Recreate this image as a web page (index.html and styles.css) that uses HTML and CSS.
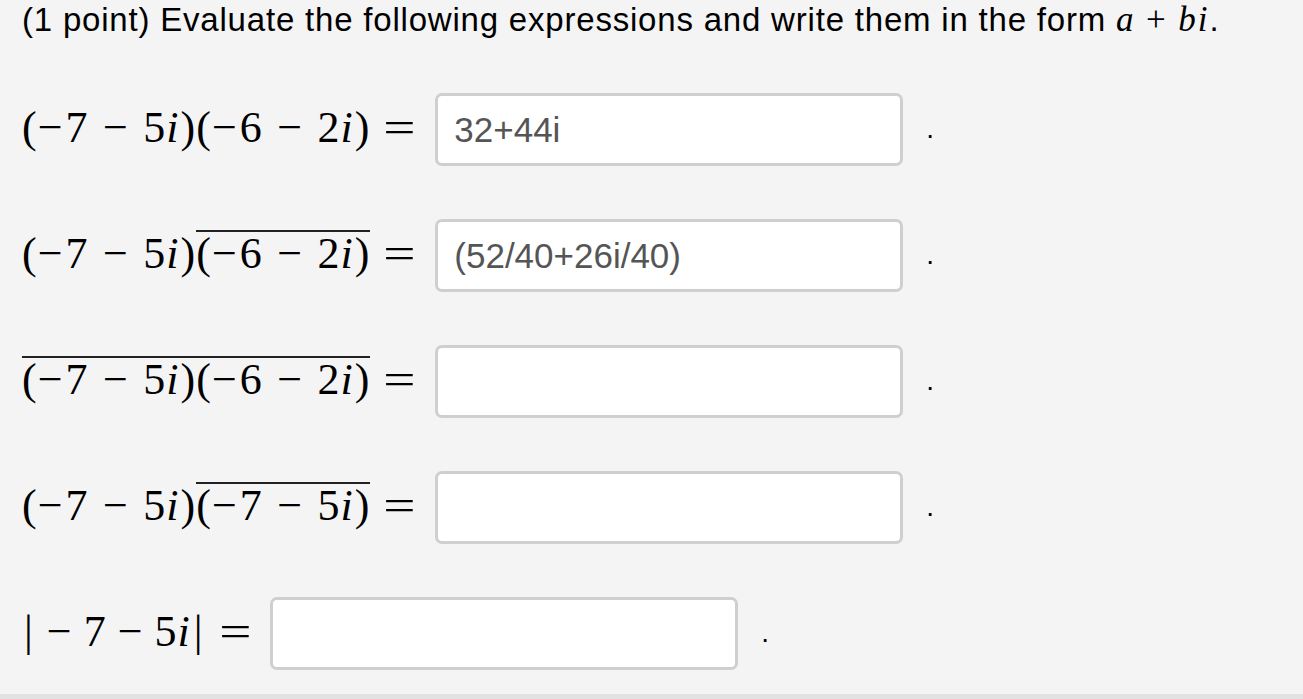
FILE: index.html
```html
<!DOCTYPE html>
<html lang="en">
<head>
    <meta charset="UTF-8">
    <title>Complex numbers</title>
    <link rel="stylesheet" href="styles.css">
</head>
<body>
    <div class="problem">
        <p class="prompt">(1 point) Evaluate the following expressions and write them in the form <span class="tmath"><i>a</i><span class="op">+</span><i>b</i><i>i</i></span>.</p>

        <div class="row">
            <span class="math">(<span class="neg">&minus;</span>7<span class="op">&minus;</span>5<i>i</i>)(<span class="neg">&minus;</span>6<span class="op">&minus;</span>2<i>i</i>)</span>
            <span class="math eq">=</span>
            <input class="answer" type="text" value="32+44i">
            <span class="dot">.</span>
        </div>

        <div class="row">
            <span class="math">(<span class="neg">&minus;</span>7<span class="op">&minus;</span>5<i>i</i>)<span class="bar">(<span class="neg">&minus;</span>6<span class="op">&minus;</span>2<i>i</i>)</span></span>
            <span class="math eq">=</span>
            <input class="answer" type="text" value="(52/40+26i/40)">
            <span class="dot">.</span>
        </div>

        <div class="row">
            <span class="math"><span class="bar">(<span class="neg">&minus;</span>7<span class="op">&minus;</span>5<i>i</i>)(<span class="neg">&minus;</span>6<span class="op">&minus;</span>2<i>i</i>)</span></span>
            <span class="math eq">=</span>
            <input class="answer" type="text" value="">
            <span class="dot">.</span>
        </div>

        <div class="row">
            <span class="math">(<span class="neg">&minus;</span>7<span class="op">&minus;</span>5<i>i</i>)<span class="bar">(<span class="neg">&minus;</span>7<span class="op">&minus;</span>5<i>i</i>)</span></span>
            <span class="math eq">=</span>
            <input class="answer" type="text" value="">
            <span class="dot">.</span>
        </div>

        <div class="row">
            <span class="math abs-expr"><span class="abs">|</span><span class="op">&minus;</span>7<span class="op">&minus;</span>5<i>i</i><span class="abs">|</span></span>
            <span class="math eq">=</span>
            <input class="answer" type="text" value="">
            <span class="dot">.</span>
        </div>
    </div>
</body>
</html>
```

FILE: styles.css
```css
body {
    margin: 0;
    padding: 0;
    background-color: #e2e2e2;
    font-family: "Liberation Sans", Arial, sans-serif;
}
.problem {
    background-color: #f4f4f4;
    height: 694px;
    box-sizing: border-box;
    padding: 0 22px;
}
.prompt {
    margin: 0;
    font-size: 33px;
    letter-spacing: 0.8px;
    line-height: 40px;
    color: #000;
    white-space: nowrap;
}
.tmath {
    font-family: "Liberation Serif", "DejaVu Serif", serif;
    font-size: 35px;
    letter-spacing: 2px;
}
.tmath .op {
    margin: 0 0.3em;
}
.row {
    display: flex;
    align-items: baseline;
    margin-top: 53px;
}
.math {
    font-family: "Liberation Serif", "DejaVu Serif", serif;
    font-size: 44px;
    line-height: 44px;
    letter-spacing: 1px;
    color: #000;
    white-space: nowrap;
}
.math i {
    margin-right: 1px;
}
.math .op {
    margin: 0 0.33em;
}
.math .neg {
    margin-right: 2px;
}
.math .bar {
    display: inline-block;
    border-top: 2px solid #222;
    padding-top: 2px;
    line-height: 40px;
}
.abs-expr .abs {
    margin: 0 2px;
}
.abs-expr .op {
    margin: 0 0.25em;
}
.eq {
    display: inline-block;
    margin-left: 17px;
    transform: scaleX(1.3);
}
.answer {
    width: 468px;
    height: 73px;
    box-sizing: border-box;
    margin-left: 22px;
    padding: 0 16px;
    border: 3px solid #cfcfcf;
    border-radius: 7px;
    background-color: #fff;
    font-family: "Liberation Sans", Arial, sans-serif;
    font-size: 35px;
    color: #555;
    outline: none;
}
.dot {
    margin-left: 23px;
    font-size: 28px;
    color: #000;
    transform: translateY(-4px);
}
```
